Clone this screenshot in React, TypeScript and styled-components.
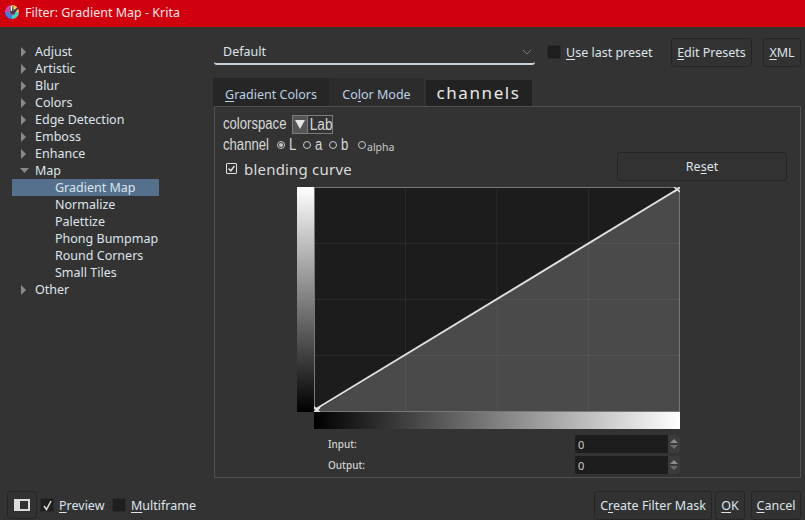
import styled, { createGlobalStyle } from 'styled-components';

const Global = createGlobalStyle`
  html, body {
    margin: 0;
    padding: 0;
    background: #333;
  }
  * {
    box-sizing: border-box;
  }
`

const Dialog = styled.div`
  width: 805px;
  height: 520px;
  overflow: hidden;
  display: flex;
  flex-direction: column;
  background: #333;
  color: #dde4ec;
  font-family: "Noto Sans", "Open Sans", sans-serif;
  font-size: 12.5px;
`

const TitleBar = styled.div`
  height: 27px;
  flex: none;
  background: #d0000f;
  display: flex;
  align-items: center;
  gap: 6px;
  padding: 0 0 3px 5px;
  color: #f4e4e4;
`

const Main = styled.div`
  height: 451px;
  flex: none;
  display: flex;
`

const Tree = styled.div`
  width: 159px;
  margin-left: 12px;
  padding-top: 16px;
  flex: none;
`

const TreeRow = styled.div<{ $selected?: boolean; $child?: boolean }>`
  height: 17px;
  display: flex;
  align-items: center;
  padding-left: ${p => (p.$child ? 43 : 8)}px;
  width: 147px;
  white-space: nowrap;
  background: ${p => (p.$selected ? '#54708c' : 'transparent')};
`

const Arrow = styled.span`
  width: 15px;
  flex: none;
  display: flex;
  svg {
    display: block;
  }
`

const Content = styled.div`
  width: 587px;
  margin-left: 43px;
  flex: none;
  display: flex;
  flex-direction: column;
`

const TopRow = styled.div`
  height: 52px;
  padding-top: 11px;
  display: flex;
  align-items: flex-start;
`

const Combo = styled.div`
  width: 321px;
  height: 27px;
  border-bottom: 2px solid #c8d2df;
  border-radius: 0 0 3px 3px;
  display: flex;
  align-items: center;
  justify-content: space-between;
  padding: 2px 3px 0 9px;
`

const Check = styled.span`
  width: 14px;
  height: 14px;
  flex: none;
  background: #1e1e1e;
  border: 1px solid #2b2b2b;
  display: flex;
  align-items: center;
  justify-content: center;
`

const CheckLabel = styled.label<{ $left: number; $width?: number }>`
  height: 28px;
  display: flex;
  align-items: center;
  gap: 5px;
  margin-left: ${p => p.$left}px;
  width: ${p => (p.$width ? `${p.$width}px` : 'auto')};
  flex: none;
`

const Key = styled.span`
  text-decoration: underline;
  text-underline-offset: 2px;
  text-decoration-thickness: 1px;
`

const Button = styled.button<{ $width: number; $left?: number }>`
  width: ${p => p.$width}px;
  height: 29px;
  margin-left: ${p => p.$left ?? 0}px;
  flex: none;
  padding: 0 0 1px;
  background: #323232;
  border: 1px solid #252525;
  border-radius: 3px;
  color: inherit;
  font: inherit;
`

const Tabs = styled.div`
  height: 28px;
  display: flex;
  align-items: flex-end;
  border-bottom: 1px solid #4f4f4f;
`

const Tab = styled.div<{ $width: number; $bg: string; $big?: boolean; $left?: number }>`
  width: ${p => p.$width}px;
  height: ${p => (p.$big ? 26 : 28)}px;
  margin-left: ${p => p.$left ?? 0}px;
  background: ${p => p.$bg};
  color: ${p => (p.$big ? '#e8e8e8' : '#bcd0e4')};
  font-size: ${p => (p.$big ? 17 : 12.5)}px;
  letter-spacing: ${p => (p.$big ? 1.6 : 0)}px;
  display: flex;
  align-items: center;
  justify-content: center;
  padding: ${p => (p.$big ? '0 1px 2px 0' : '5px 0 0')};
`

const Panel = styled.div`
  width: 587px;
  height: 371px;
  border: 1px solid #4f4f4f;
  border-top: 0;
  padding: 7px 0 0 8px;
  display: flex;
  flex-direction: column;
`

const SettingsRow = styled.div`
  display: flex;
  align-items: flex-start;
  height: 73px;
`

const Settings = styled.div`
  width: 394px;
  flex: none;
  color: #d8d8d8;
`

const Line = styled.div<{ $top?: number }>`
  height: 20px;
  padding-top: ${p => p.$top ?? 0}px;
  display: flex;
  align-items: center;
  font-family: "Liberation Sans", sans-serif;
  font-size: 16px;
`

/* the reference draws these labels in a tall condensed face */
const Narrow = styled.span<{ $width: number }>`
  width: ${p => p.$width}px;
  flex: none;
  transform: scaleX(0.82);
  transform-origin: left center;
`

const LabSelect = styled.span`
  display: flex;
  height: 19px;
  border: 1px solid #7b7b7b;
`

const LabArrow = styled.span`
  width: 15px;
  background: #555;
  border-right: 1px solid #7b7b7b;
  display: flex;
  align-items: center;
  justify-content: center;
`

const LabText = styled.span`
  width: 24px;
  text-align: center;
  line-height: 17px;
  transform: scaleX(0.85);
`

const Radio = styled.span<{ $on?: boolean; $left?: number }>`
  width: 8px;
  height: 8px;
  margin-left: ${p => p.$left ?? 0}px;
  margin-right: 4px;
  border-radius: 50%;
  border: 1px solid #c8c8c8;
  flex: none;
  display: flex;
  align-items: center;
  justify-content: center;
  &::after {
    content: '';
    width: 4px;
    height: 4px;
    border-radius: 50%;
    background: ${p => (p.$on ? '#c8c8c8' : 'transparent')};
  }
`

const Alpha = styled.span`
  font-family: "Noto Sans", sans-serif;
  font-size: 10.5px;
  color: #c8c8c8;
  margin: 3px 0 0 -3px;
`

const Blending = styled.div`
  height: 25px;
  margin-top: 2px;
  display: flex;
  align-items: center;
  gap: 7px;
  padding-left: 3px;
  font-size: 15px;
  letter-spacing: 0.2px;
  color: #dcdcdc;
`

const SmallBox = styled.span`
  width: 11px;
  height: 11px;
  border: 1.5px solid #e0e0e0;
  border-radius: 1px;
  display: flex;
  align-items: center;
  justify-content: center;
`

const ResetWrap = styled.div`
  padding-top: 38px;
`

const CurveGrid = styled.div`
  margin-left: 74px;
  display: grid;
  grid-template-columns: 17px 366px;
  grid-template-rows: 225px 17px;
`

const VRamp = styled.div`
  background: linear-gradient(to top, #000, #fff);
`

const HRamp = styled.div`
  grid-column: 2;
  background: linear-gradient(to right, #000, #fff);
`

const Plot = styled.div`
  background: #1c1c1c;
  svg {
    display: block;
  }
`

const Inputs = styled.div`
  margin: 6px 0 0 105px;
  display: flex;
  flex-direction: column;
  gap: 3px;
`

const InputRow = styled.div`
  height: 18px;
  display: flex;
  align-items: center;
`

const InputLabel = styled.span`
  width: 247px;
  flex: none;
  font-size: 10px;
  font-weight: 500;
  color: #d0d0d0;
`

const Spin = styled.div`
  width: 105px;
  height: 18px;
  background: #1d1d1d;
  border-radius: 2px;
  display: flex;
  align-items: center;
  justify-content: space-between;
  padding-left: 3px;
  font-size: 11px;
  color: #ccc;
`

const SpinBtns = styled.div`
  width: 12px;
  height: 100%;
  background: #3b3b3b;
  border-radius: 0 2px 2px 0;
  display: flex;
  flex-direction: column;
  align-items: center;
  justify-content: center;
  gap: 2px;
`

const SpinArrow = styled.span<{ $down?: boolean }>`
  width: 0;
  height: 0;
  border-left: 4px solid transparent;
  border-right: 4px solid transparent;
  border-bottom: ${p => (p.$down ? '0' : '4px solid #8c8c8c')};
  border-top: ${p => (p.$down ? '4px solid #6c6c6c' : '0')};
`

const Footer = styled.div`
  height: 42px;
  flex: none;
  display: flex;
  align-items: flex-start;
  padding: 13px 4px 0 7px;
`

const LayoutBtn = styled(Button)`
  height: 28px;
  padding: 0;
  display: flex;
  align-items: center;
  justify-content: center;
`

const Spacer = styled.div`
  flex: 1;
`

const TREE = ['Adjust', 'Artistic', 'Blur', 'Colors', 'Edge Detection', 'Emboss', 'Enhance']
const MAP_ITEMS = ['Gradient Map', 'Normalize', 'Palettize', 'Phong Bumpmap', 'Round Corners', 'Small Tiles']

const closed = (
  <svg width="7" height="10" viewBox="0 0 7 10"><path d="M1 0 L6 5 L1 10 Z" fill="#8a8a8a" /></svg>
)
const opened = (
  <svg width="9" height="7" viewBox="0 0 9 7"><path d="M0 1 H9 L4.5 6 Z" fill="#8a8a8a" /></svg>
)

const KritaLogo = () => (
  <svg width="14" height="14" viewBox="0 0 14 14">
    <path d="M7 7 L7 0 A7 7 0 0 0 0 7 Z" fill="#e83c9c" />
    <path d="M7 7 L0 7 A7 7 0 0 0 7 14 Z" fill="#3f7fe8" />
    <path d="M7 7 L7 14 A7 7 0 0 0 14 7 Z" fill="#3ed6c0" />
    <path d="M7 7 L14 7 A7 7 0 0 0 7 0 Z" fill="#e8d84a" />
    <circle cx="7" cy="7" r="3.6" fill="#8a6aa8" />
    <path d="M5 1 L8.5 1 L8 6 L12.5 2.2 L13.5 3.5 L8.5 9.5 L5.5 8.5 Z" fill="#4a3a4a" />
    <path d="M5.5 1 L7.5 1 L7 6 L5.8 6 Z" fill="#eee" />
  </svg>
)

const App = () => {
  return (
    <Dialog>
      <Global />
      <TitleBar>
        <KritaLogo />
        Filter: Gradient Map - Krita
      </TitleBar>
      <Main>
        <Tree>
          {TREE.map(name => (
            <TreeRow key={name}>
              <Arrow>{closed}</Arrow>
              {name}
            </TreeRow>
          ))}
          <TreeRow>
            <Arrow>{opened}</Arrow>
            Map
          </TreeRow>
          {MAP_ITEMS.map((name, idx) => (
            <TreeRow key={name} $child $selected={idx === 0}>{name}</TreeRow>
          ))}
          <TreeRow>
            <Arrow>{closed}</Arrow>
            Other
          </TreeRow>
        </Tree>
        <Content>
          <TopRow>
            <Combo>
              Default
              <svg width="10" height="6" viewBox="0 0 10 6"><path d="M1 1 L5 5 L9 1" fill="none" stroke="#777" strokeWidth="1" /></svg>
            </Combo>
            <CheckLabel $left={12} $width={124}>
              <Check />
              <span><Key>U</Key>se last preset</span>
            </CheckLabel>
            <Button $width={81}><Key>E</Key>dit Presets</Button>
            <Button $width={38} $left={11}><Key>X</Key>ML</Button>
          </TopRow>
          <Tabs>
            <Tab $width={116} $bg="#262626" $left={-1}><span><Key>G</Key>radient Colors</span></Tab>
            <Tab $width={95} $bg="#2c2c2c"><span>Co<Key>l</Key>or Mode</span></Tab>
            <Tab $width={106} $bg="#222" $big $left={2}>channels</Tab>
          </Tabs>
          <Panel>
            <SettingsRow>
              <Settings>
                <Line>
                  <Narrow $width={69}>colorspace</Narrow>
                  <LabSelect>
                    <LabArrow>
                      <svg width="10" height="9" viewBox="0 0 10 9"><path d="M0 0 H10 L5 9 Z" fill="#e4e4e4" /></svg>
                    </LabArrow>
                    <LabText>Lab</LabText>
                  </LabSelect>
                </Line>
                <Line $top={2}>
                  <Narrow $width={54}>channel</Narrow>
                  <Radio $on />
                  <Narrow $width={7}>L</Narrow>
                  <Radio $left={7} />
                  <Narrow $width={7}>a</Narrow>
                  <Radio $left={7} />
                  <Narrow $width={7}>b</Narrow>
                  <Radio $left={10} />
                  <Alpha>alpha</Alpha>
                </Line>
                <Blending>
                  <SmallBox>
                    <svg width="7" height="7" viewBox="0 0 7 7"><path d="M0.5 3.5 L2.8 5.8 L6.5 1" fill="none" stroke="#e0e0e0" strokeWidth="1.5" /></svg>
                  </SmallBox>
                  blending curve
                </Blending>
              </Settings>
              <ResetWrap>
                <Button $width={170}>Re<Key>s</Key>et</Button>
              </ResetWrap>
            </SettingsRow>
            <CurveGrid>
              <VRamp />
              <Plot>
                <svg width="366" height="225" viewBox="0 0 366 225">
                  <path d="M0 225 L366 0 V225 Z" fill="#4a4a4a" />
                  <path d="M91.5 0 V225 M183 0 V225 M274.5 0 V225 M0 56.5 H366 M0 112.5 H366 M0 168.5 H366" stroke="#fff" strokeOpacity="0.06" fill="none" />
                  <rect x="0.5" y="0.5" width="365" height="224" fill="none" stroke="#777" />
                  <path d="M2 222 L364 2" stroke="#e0e0e0" strokeWidth="2" />
                  <path d="M0 220 L6 226 M0 226 L6 220" stroke="#e6e6e6" strokeWidth="2" />
                  <path d="M360 0 L366 5 M360 5 L366 0" stroke="#e6e6e6" strokeWidth="1.5" />
                </svg>
              </Plot>
              <HRamp />
            </CurveGrid>
            <Inputs>
              <InputRow>
                <InputLabel>Input:</InputLabel>
                <Spin>0<SpinBtns><SpinArrow /><SpinArrow $down /></SpinBtns></Spin>
              </InputRow>
              <InputRow>
                <InputLabel>Output:</InputLabel>
                <Spin>0<SpinBtns><SpinArrow /><SpinArrow $down /></SpinBtns></Spin>
              </InputRow>
            </Inputs>
          </Panel>
        </Content>
      </Main>
      <Footer>
        <LayoutBtn $width={30}>
          <svg width="16" height="12" viewBox="0 0 16 12"><path fillRule="evenodd" d="M0 0 H16 V12 H0 Z M6 2 V10 H14 V2 Z" fill="#dcdcdc" /></svg>
        </LayoutBtn>
        <CheckLabel $left={3} $width={72}>
          <Check>
            <svg width="11" height="11" viewBox="0 0 11 11"><path d="M2 6 L4.5 9.5 L9 1" fill="none" stroke="#d8d8d8" strokeWidth="1.6" /></svg>
          </Check>
          <span><Key>P</Key>review</span>
        </CheckLabel>
        <CheckLabel $left={0}>
          <Check />
          <span><Key>M</Key>ultiframe</span>
        </CheckLabel>
        <Spacer />
        <Button $width={118}>C<Key>r</Key>eate Filter Mask</Button>
        <Button $width={30} $left={3}><Key>O</Key>K</Button>
        <Button $width={50} $left={6}><Key>C</Key>ancel</Button>
      </Footer>
    </Dialog>
  );
};

export default App;
